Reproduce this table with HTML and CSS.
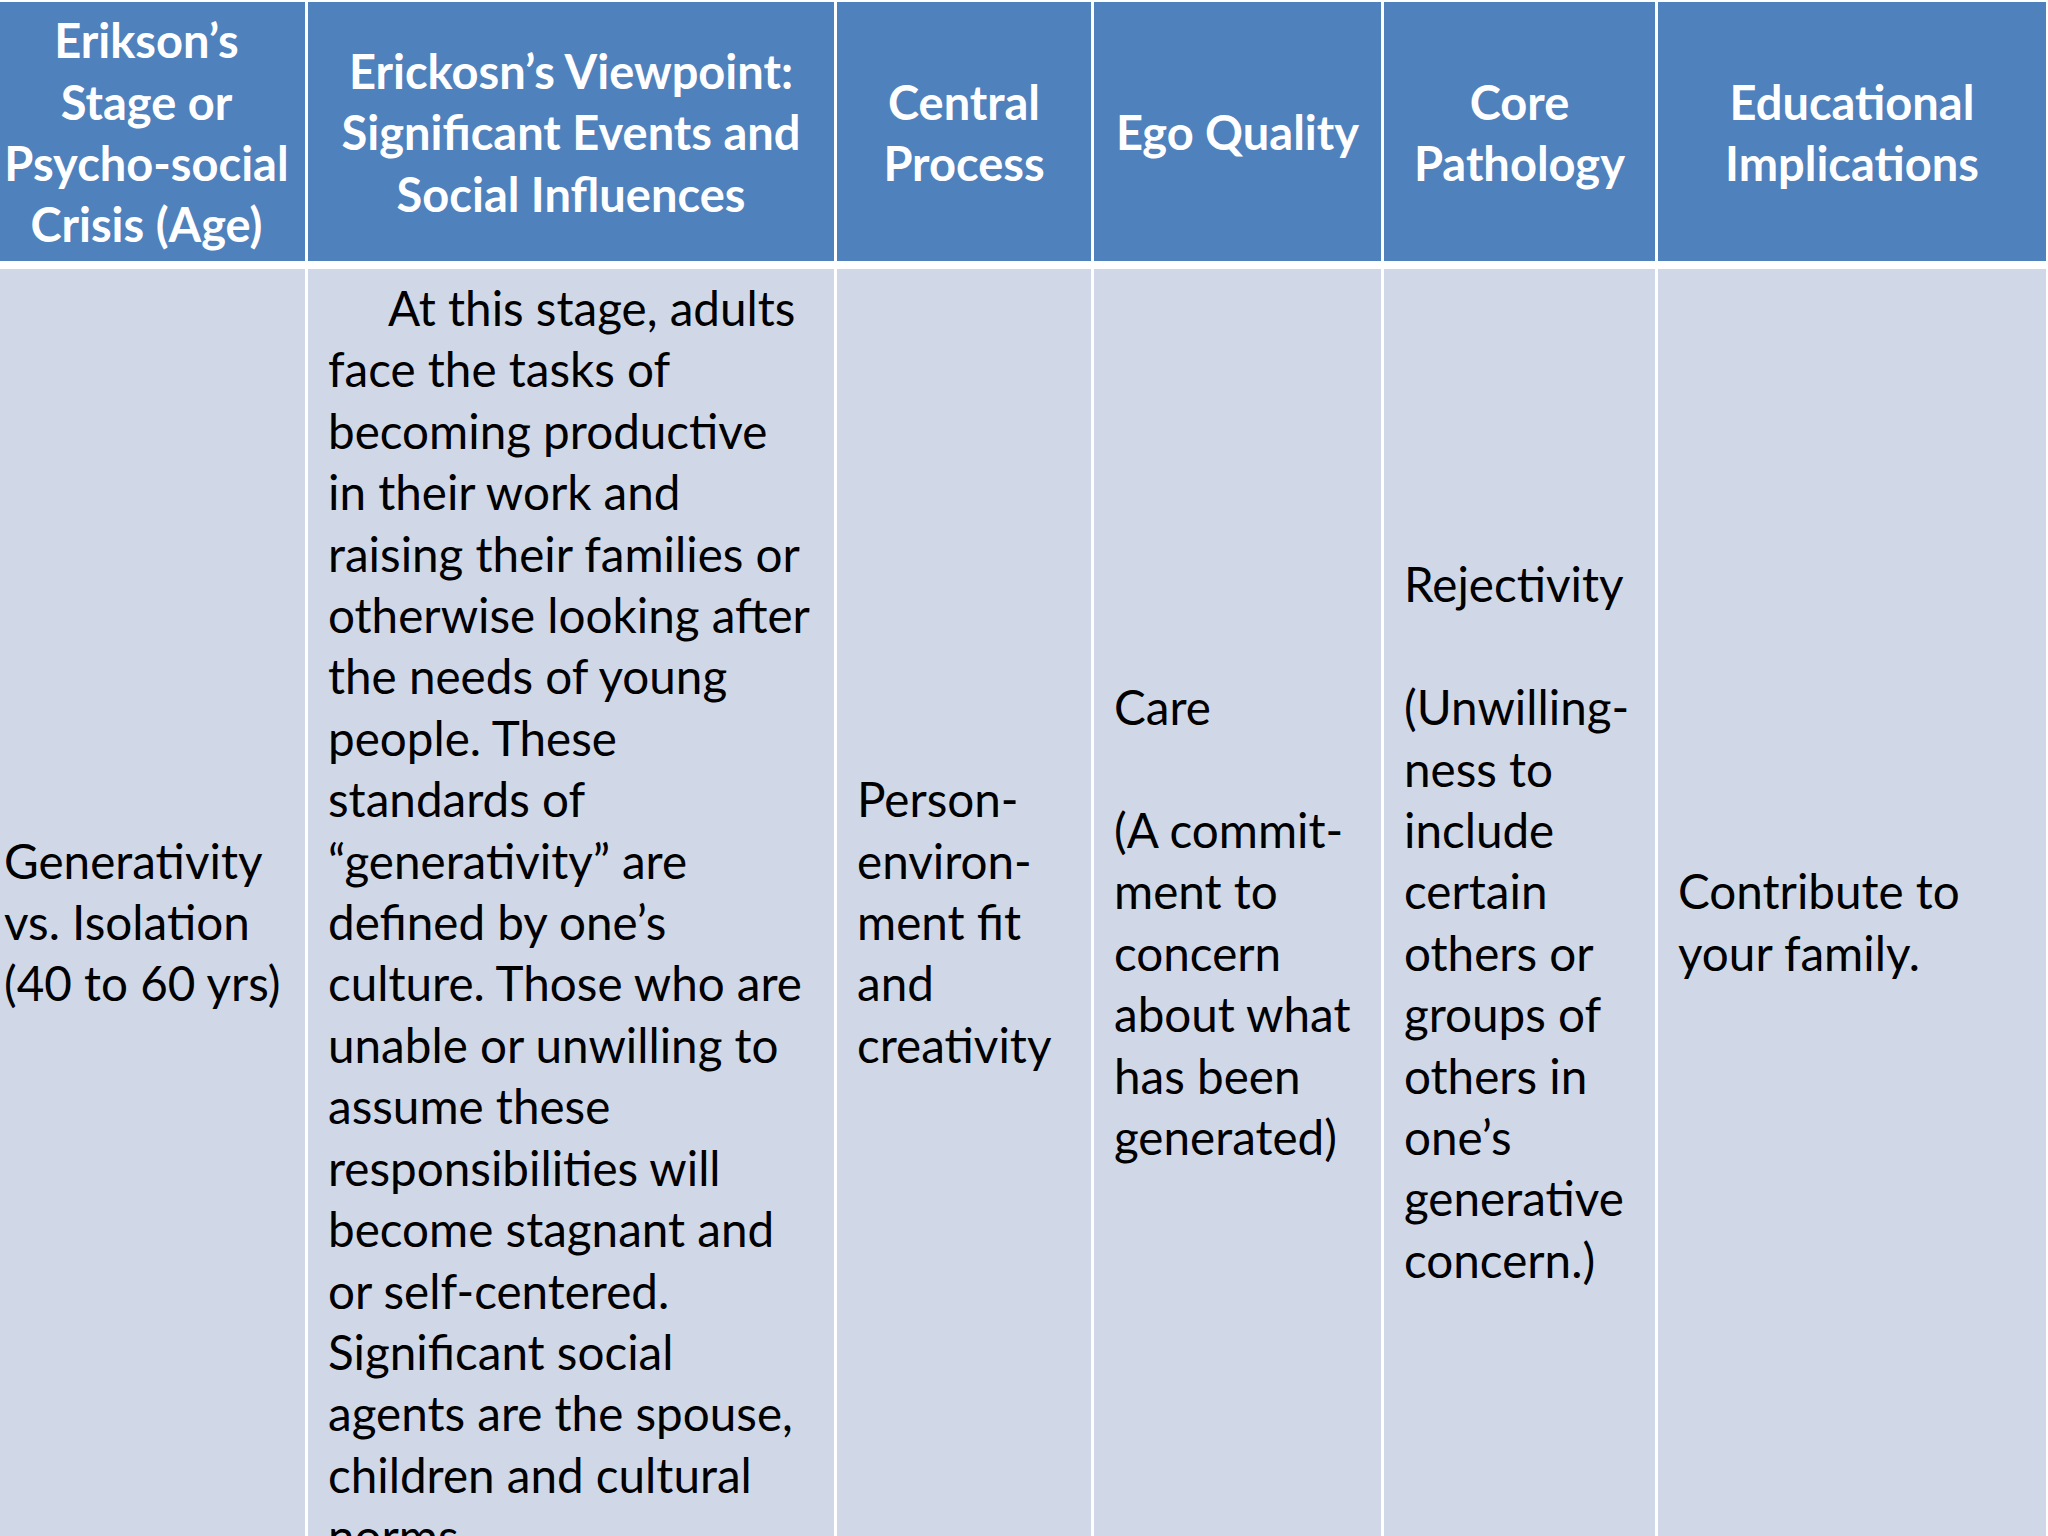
FILE: index.html
```html
<!DOCTYPE html>
<html lang="en">
<head>
<meta charset="utf-8">
<title>Erikson's Stages</title>
<link rel="stylesheet" href="styles.css">
</head>
<body>
<div class="sheet">
  <div class="grid">
    <div class="cell head first-head">Erikson’s<br>Stage or<br>Psycho-social<br>Crisis (Age)</div>
    <div class="cell head">Erickosn’s Viewpoint:<br>Significant Events and<br>Social Influences</div>
    <div class="cell head">Central<br>Process</div>
    <div class="cell head">Ego Quality</div>
    <div class="cell head">Core<br>Pathology</div>
    <div class="cell head">Educational<br>Implications</div>

    <div class="cell body first">Generativity<br>vs. Isolation<br>(40 to 60 yrs)</div>
    <div class="cell body"><p class="para"><span class="indent">At this stage, adults</span><br>face the tasks of<br>becoming productive<br>in their work and<br>raising their families or<br>otherwise looking after<br>the needs of young<br>people. These<br>standards of<br>“generativity” are<br>defined by one’s<br>culture. Those who are<br>unable or unwilling to<br>assume these<br>responsibilities will<br>become stagnant and<br>or self-centered.<br>Significant social<br>agents are the spouse,<br>children and cultural<br>norms.</p></div>
    <div class="cell body">Person-<br>environ-<br>ment fit<br>and<br>creativity</div>
    <div class="cell body">Care<br><br>(A commit-<br>ment to<br>concern<br>about what<br>has been<br>generated)</div>
    <div class="cell body">Rejectivity<br><br>(Unwilling-<br>ness to<br>include<br>certain<br>others or<br>groups of<br>others in<br>one’s<br>generative<br>concern.)</div>
    <div class="cell body">Contribute to<br>your family.</div>
  </div>
</div>
</body>
</html>
```
FILE: styles.css
```css
html, body {
  margin: 0;
  padding: 0;
  height: 1536px;
  overflow: hidden;
  background: #ffffff;
}

.sheet {
  width: 2048px;
  padding-top: 2px;
  background: #ffffff;
}

.grid {
  display: grid;
  grid-template-columns: 305px 526px 254px 287px 271px 388px;
  grid-template-rows: 259px auto;
  column-gap: 3px;
  row-gap: 8px;
  width: 2046px;
  font-family: Lato, "Open Sans", sans-serif;
  line-height: 61.4px;
  white-space: nowrap;
}

.cell {
  display: flex;
  align-items: center;
}

.head {
  background: #4f81bd;
  color: #ffffff;
  font-weight: 700;
  font-size: 47px;
  justify-content: center;
  text-align: center;
  padding-top: 3px;
}

.first-head {
  padding-right: 12px;
}

.body {
  background: #d0d8e8;
  color: #000000;
  font-size: 47.6px;
  padding: 8px 0 8px 20px;
  text-align: left;
}

.body.first {
  padding-left: 4px;
}

.para {
  margin: 0;
}

.indent {
  padding-left: 60px;
}
```
